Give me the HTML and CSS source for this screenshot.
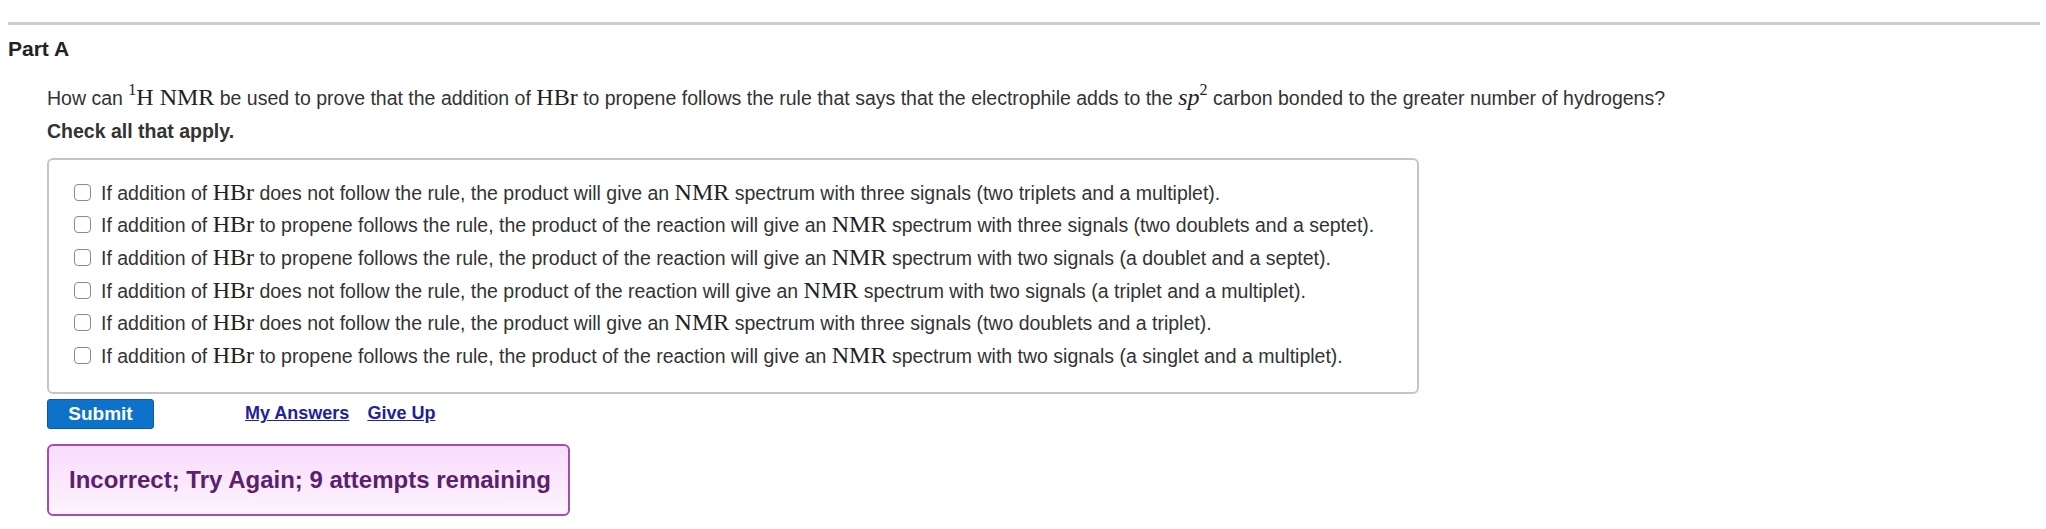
FILE: index.html
```html
<!DOCTYPE html>
<html lang="en">
<head>
<meta charset="utf-8">
<title>Part A</title>
<link rel="stylesheet" href="styles.css">
</head>
<body>
<div class="rule"></div>
<h2 class="part-title">Part A</h2>
<div class="content">
  <p class="question">How can <span class="math"><sup>1</sup>H NMR</span> be used to prove that the addition of <span class="math">HBr</span> to propene follows the rule that says that the electrophile adds to the <span class="math"><i>sp</i><sup>2</sup></span> carbon bonded to the greater number of hydrogens?</p>
  <p class="instruction">Check all that apply.</p>
  <div class="choices">
    <label class="choice"><input type="checkbox"><span>If addition of <span class="math">HBr</span> does not follow the rule, the product will give an <span class="math">NMR</span> spectrum with three signals (two triplets and a multiplet).</span></label>
    <label class="choice"><input type="checkbox"><span>If addition of <span class="math">HBr</span> to propene follows the rule, the product of the reaction will give an <span class="math">NMR</span> spectrum with three signals (two doublets and a septet).</span></label>
    <label class="choice"><input type="checkbox"><span>If addition of <span class="math">HBr</span> to propene follows the rule, the product of the reaction will give an <span class="math">NMR</span> spectrum with two signals (a doublet and a septet).</span></label>
    <label class="choice"><input type="checkbox"><span>If addition of <span class="math">HBr</span> does not follow the rule, the product of the reaction will give an <span class="math">NMR</span> spectrum with two signals (a triplet and a multiplet).</span></label>
    <label class="choice"><input type="checkbox"><span>If addition of <span class="math">HBr</span> does not follow the rule, the product will give an <span class="math">NMR</span> spectrum with three signals (two doublets and a triplet).</span></label>
    <label class="choice"><input type="checkbox"><span>If addition of <span class="math">HBr</span> to propene follows the rule, the product of the reaction will give an <span class="math">NMR</span> spectrum with two signals (a singlet and a multiplet).</span></label>
  </div>
  <div class="actions">
    <button class="submit" type="button">Submit</button>
    <a class="link" href="#">My Answers</a>
    <a class="link" href="#">Give Up</a>
  </div>
  <div class="feedback">Incorrect; Try Again; 9 attempts remaining</div>
</div>
</body>
</html>
```

FILE: styles.css
```css
html, body {
  margin: 0;
  padding: 0;
  background: #ffffff;
}

body {
  font-family: "Liberation Sans", Arial, Helvetica, sans-serif;
  color: #333333;
  font-size: 19.5px;
}

.rule {
  height: 3px;
  background: #cccccc;
  margin: 22px 6px 0 8px;
}

.part-title {
  margin: 11px 0 0 8px;
  font-size: 21px;
  line-height: 26px;
  font-weight: bold;
  color: #222222;
}

.content {
  padding-left: 47px;
}

.question {
  margin: 21px 0 0 0;
  line-height: 28px;
}

.math {
  font-family: "Liberation Serif", "Times New Roman", serif;
  font-size: 24px;
  color: #222222;
}

.math sup {
  font-size: 16px;
  vertical-align: 10px;
  line-height: 0;
}

.math i {
  font-style: italic;
}

.instruction {
  margin: 6px 0 0 0;
  font-weight: bold;
  line-height: 26px;
  color: #333333;
}

.choices {
  margin-top: 14px;
  width: 1372px;
  box-sizing: border-box;
  border: 2px solid #c4c4c4;
  border-radius: 6px;
  padding: 16px 0 20px 25px;
}

.choice {
  display: flex;
  align-items: center;
  height: 32.6px;
  line-height: 26px;
}

.choice input {
  appearance: none;
  -webkit-appearance: none;
  margin: 0 10px 0 0;
  width: 17px;
  height: 17px;
  flex: none;
  box-sizing: border-box;
  border: 1.5px solid #8a8a8a;
  border-radius: 4px;
  background: #ffffff;
}

.actions {
  display: flex;
  align-items: center;
  margin-top: 5px;
}

.submit {
  width: 107px;
  height: 30px;
  background: #0d72c9;
  border: 1px solid #0a5aa6;
  border-radius: 3px;
  color: #ffffff;
  font-family: "Liberation Sans", Arial, sans-serif;
  font-size: 19px;
  font-weight: bold;
  padding: 0;
  margin-right: 91px;
}

.link {
  color: #22229a;
  font-weight: bold;
  font-size: 18px;
  margin-right: 18px;
  text-decoration: underline;
}

.feedback {
  margin-top: 15px;
  width: 523px;
  height: 72px;
  box-sizing: border-box;
  border: 2px solid #a24db3;
  border-radius: 6px;
  background: linear-gradient(#f9dcfc, #fdf3fe);
  color: #5a1f6e;
  font-size: 24px;
  font-weight: bold;
  display: flex;
  align-items: center;
  padding-left: 20px;
}
```
